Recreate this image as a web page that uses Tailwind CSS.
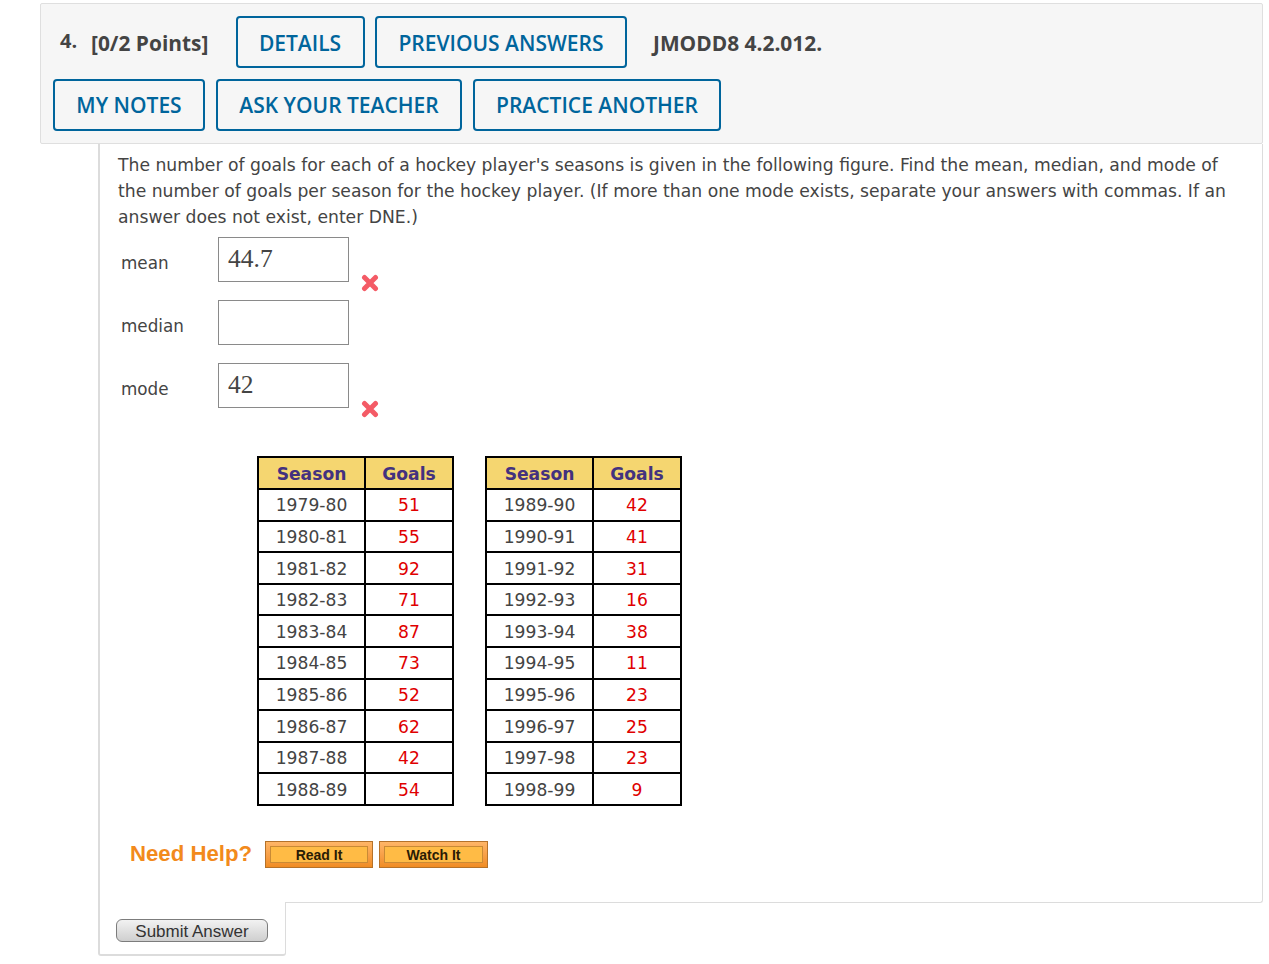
<!DOCTYPE html>
<html lang="en">
<head>
  <meta charset="UTF-8" />
  <meta name="viewport" content="width=device-width, initial-scale=1.0"/>
  <title>Question 4</title>
  <script src="https://cdn.jsdelivr.net/npm/@tailwindcss/browser@4"></script>
</head>
<body class="bg-white overflow-hidden h-[964px] text-[#444] font-['DejaVu_Sans','Liberation_Sans',sans-serif]">
  <div class="pt-[3px] pl-[40px] pr-[6px]">
    <!-- question header -->
    <div class="h-[141px] bg-[#f6f6f6] border border-[#dfdfdf] rounded-[2px] pl-[12px] pt-[12px] font-['Open_Sans','Noto_Sans',sans-serif]">
      <div class="flex items-center h-[52px] pl-[7px]">
        <span class="text-[20px] font-bold w-[31px] -mt-[3px]">4.</span>
        <span class="text-[20.9px] font-bold w-[145px] pt-[4px]">[0/2 Points]</span>
        <a class="flex items-center justify-center pt-[3px] pr-[1px] w-[129px] h-[52px] border-[2.5px] border-[#00659c] rounded-[4px] text-[#00659c] text-[21px] font-semibold">DETAILS</a>
        <a class="flex items-center justify-center pt-[3px] w-[252px] h-[52px] ml-[10px] border-[2.5px] border-[#00659c] rounded-[4px] text-[#00659c] text-[21px] font-semibold">PREVIOUS ANSWERS</a>
        <span class="ml-[26px] pt-[4px] text-[20.9px] font-bold">JMODD8 4.2.012.</span>
      </div>
      <div class="flex gap-[11px] mt-[11px]">
        <a class="flex items-center justify-center pt-[2px] w-[152px] h-[52px] border-[2.5px] border-[#00659c] rounded-[4px] text-[#00659c] text-[21px] font-semibold">MY NOTES</a>
        <a class="flex items-center justify-center pt-[2px] w-[246px] h-[52px] border-[2.5px] border-[#00659c] rounded-[4px] text-[#00659c] text-[21px] font-semibold">ASK YOUR TEACHER</a>
        <a class="flex items-center justify-center pt-[2px] w-[248px] h-[52px] border-[2.5px] border-[#00659c] rounded-[4px] text-[#00659c] text-[21px] font-semibold">PRACTICE ANOTHER</a>
      </div>
    </div>

    <!-- question body -->
    <div class="ml-[58px] h-[759px] border-l-2 border-r border-b border-[#dcdcdc] rounded-br-[3px] pl-[18px] pr-[20px] pt-[8px]">
      <p class="text-[17.2px] leading-[26px] w-[1130px]">The number of goals for each of a hockey player's seasons is given in the following figure. Find the mean, median, and mode of the number of goals per season for the hockey player. (If more than one mode exists, separate your answers with commas. If an answer does not exist, enter DNE.)</p>

      <div class="mt-[7px] pl-[3px] flex flex-col gap-[18px] text-[16.8px]">
        <div class="flex items-center h-[45px]">
          <span class="w-[97px] pt-[9px]">mean</span>
          <div class="w-[131px] h-[45px] border border-[#8a8a8a] pl-[9px] font-['Liberation_Serif',serif] text-[25.5px] leading-[41px]">44.7</div>
          <svg class="ml-[12px] mt-[46px] w-[18px] h-[18px]" viewBox="0 0 18 18"><path d="M3.5 3.5 L14.5 14.5 M14.5 3.5 L3.5 14.5" stroke="#f45b66" stroke-width="5" stroke-linecap="round"/></svg>
        </div>
        <div class="flex items-center h-[45px]">
          <span class="w-[97px] pt-[9px]">median</span>
          <div class="w-[131px] h-[45px] border border-[#8a8a8a]"></div>
        </div>
        <div class="flex items-center h-[45px]">
          <span class="w-[97px] pt-[9px]">mode</span>
          <div class="w-[131px] h-[45px] border border-[#8a8a8a] pl-[9px] font-['Liberation_Serif',serif] text-[25.5px] leading-[41px]">42</div>
          <svg class="ml-[12px] mt-[46px] w-[18px] h-[18px]" viewBox="0 0 18 18"><path d="M3.5 3.5 L14.5 14.5 M14.5 3.5 L3.5 14.5" stroke="#f45b66" stroke-width="5" stroke-linecap="round"/></svg>
        </div>
      </div>

      <!-- season tables -->
      <div class="flex gap-[31px] mt-[48px] pl-[139px] text-[17.15px]">
        <table class="border-collapse border-2 border-black text-center w-[197px] table-fixed [&_td]:pt-[3px] [&_th]:pt-[3px]">
          <thead>
            <tr class="h-[32px] bg-[#f5d670] text-[#43317f] font-bold"><th class="w-[107px] border-2 border-black">Season</th><th class="border-2 border-black">Goals</th></tr>
          </thead>
          <tbody>
            <tr class="h-[31.6px]"><td class="border-2 border-black">1979-80</td><td class="border-2 border-black text-[#e00000]">51</td></tr>
            <tr class="h-[31.6px]"><td class="border-2 border-black">1980-81</td><td class="border-2 border-black text-[#e00000]">55</td></tr>
            <tr class="h-[31.6px]"><td class="border-2 border-black">1981-82</td><td class="border-2 border-black text-[#e00000]">92</td></tr>
            <tr class="h-[31.6px]"><td class="border-2 border-black">1982-83</td><td class="border-2 border-black text-[#e00000]">71</td></tr>
            <tr class="h-[31.6px]"><td class="border-2 border-black">1983-84</td><td class="border-2 border-black text-[#e00000]">87</td></tr>
            <tr class="h-[31.6px]"><td class="border-2 border-black">1984-85</td><td class="border-2 border-black text-[#e00000]">73</td></tr>
            <tr class="h-[31.6px]"><td class="border-2 border-black">1985-86</td><td class="border-2 border-black text-[#e00000]">52</td></tr>
            <tr class="h-[31.6px]"><td class="border-2 border-black">1986-87</td><td class="border-2 border-black text-[#e00000]">62</td></tr>
            <tr class="h-[31.6px]"><td class="border-2 border-black">1987-88</td><td class="border-2 border-black text-[#e00000]">42</td></tr>
            <tr class="h-[31.6px]"><td class="border-2 border-black">1988-89</td><td class="border-2 border-black text-[#e00000]">54</td></tr>
          </tbody>
        </table>
        <table class="border-collapse border-2 border-black text-center w-[197px] table-fixed [&_td]:pt-[3px] [&_th]:pt-[3px]">
          <thead>
            <tr class="h-[32px] bg-[#f5d670] text-[#43317f] font-bold"><th class="w-[107px] border-2 border-black">Season</th><th class="border-2 border-black">Goals</th></tr>
          </thead>
          <tbody>
            <tr class="h-[31.6px]"><td class="border-2 border-black">1989-90</td><td class="border-2 border-black text-[#e00000]">42</td></tr>
            <tr class="h-[31.6px]"><td class="border-2 border-black">1990-91</td><td class="border-2 border-black text-[#e00000]">41</td></tr>
            <tr class="h-[31.6px]"><td class="border-2 border-black">1991-92</td><td class="border-2 border-black text-[#e00000]">31</td></tr>
            <tr class="h-[31.6px]"><td class="border-2 border-black">1992-93</td><td class="border-2 border-black text-[#e00000]">16</td></tr>
            <tr class="h-[31.6px]"><td class="border-2 border-black">1993-94</td><td class="border-2 border-black text-[#e00000]">38</td></tr>
            <tr class="h-[31.6px]"><td class="border-2 border-black">1994-95</td><td class="border-2 border-black text-[#e00000]">11</td></tr>
            <tr class="h-[31.6px]"><td class="border-2 border-black">1995-96</td><td class="border-2 border-black text-[#e00000]">23</td></tr>
            <tr class="h-[31.6px]"><td class="border-2 border-black">1996-97</td><td class="border-2 border-black text-[#e00000]">25</td></tr>
            <tr class="h-[31.6px]"><td class="border-2 border-black">1997-98</td><td class="border-2 border-black text-[#e00000]">23</td></tr>
            <tr class="h-[31.6px]"><td class="border-2 border-black">1998-99</td><td class="border-2 border-black text-[#e00000]">9</td></tr>
          </tbody>
        </table>
      </div>

      <!-- help -->
      <div class="flex items-center mt-[33px] pl-[12px] font-['Liberation_Sans',sans-serif]">
        <span class="text-[#f28a1c] text-[22.2px] font-bold w-[135px] -mt-[2px]">Need Help?</span>
        <a class="w-[108px] h-[27px] border border-[#b5722a] bg-gradient-to-b from-[#ffb566] to-[#f08c22] p-[4px] flex">
          <span class="flex-1 flex items-center justify-center pt-[1px] bg-[#ffbb45] border border-[#c98a35] text-[14px] font-bold text-[#2a1c05]">Read It</span>
        </a>
        <a class="w-[109px] h-[27px] ml-[6px] border border-[#b5722a] bg-gradient-to-b from-[#ffb566] to-[#f08c22] p-[4px] flex">
          <span class="flex-1 flex items-center justify-center pt-[1px] bg-[#ffbb45] border border-[#c98a35] text-[14px] font-bold text-[#2a1c05]">Watch It</span>
        </a>
      </div>
    </div>

    <!-- submit tab -->
    <div class="ml-[58px] w-[188px] h-[54px] -mt-px bg-white border-l-2 border-r border-b-2 border-[#dcdcdc] rounded-b-[3px] pl-[16px] pt-[17px]">
      <button class="w-[152px] h-[23px] rounded-[6px] border border-[#7c7c7c] bg-gradient-to-b from-[#f2f2f2] to-[#cfcfcf] text-[17px] leading-[23px] text-[#333] font-['Liberation_Sans',sans-serif]">Submit Answer</button>
    </div>
  </div>
</body>
</html>
